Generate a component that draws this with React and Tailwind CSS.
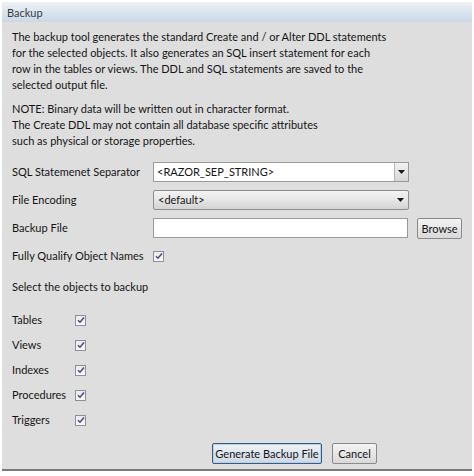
// <= BACKUP DIALOG =>
const objectTypes = ["Tables", "Views", "Indexes", "Procedures", "Triggers"];

// small checked checkbox like the Windows 7 look
const CheckBox = () => (
  <span className="flex items-center justify-center w-[11px] h-[11px] border border-[#8f8f9a] bg-gradient-to-b from-[#e9e9ef] to-[#fafafa]">
    <svg width="8" height="8" viewBox="0 0 8 8">
      <path d="M1 4.2 L3 6.2 L7 1.6" fill="none" stroke="#4a4f7a" strokeWidth="1.6" />
    </svg>
  </span>
);

const DropArrow = () => (
  <svg width="7" height="4" viewBox="0 0 7 4">
    <path d="M0 0 H7 L3.5 4 Z" fill="#1a1a1a" />
  </svg>
);

const App = () => {
  return (
    // PAGE
    <div
      className="w-[474px] h-[476px] bg-white pt-[2px] text-[11px] text-[#151515] whitespace-nowrap"
      style={{ fontFamily: 'Lato, "Noto Sans", sans-serif' }}
    >
      {/* DIALOG */}
      <div className="ml-[2px] w-[470px] h-[469px] flex flex-col bg-[#dedede] border-b-[2px] border-[#7a7a7a]">
        {/* TITLE BAR */}
        <div className="h-[20px] flex items-center pl-[5px] bg-gradient-to-b from-[#eef1f6] to-[#c9d8e8] text-[#3a3a3a] leading-none">
          Backup
        </div>

        {/* BODY */}
        <div className="flex flex-col px-[10px] pt-[7px] leading-[16px]">
          <p>
            The backup tool generates the standard Create and / or Alter DDL statements
            <br />
            for the selected objects. It also generates an SQL insert statement for each
            <br />
            row in the tables or views. The DDL and SQL statements are saved to the
            <br />
            selected output file.
          </p>
          <p className="mt-[8px]">
            NOTE: Binary data will be written out in character format.
            <br />
            The Create DDL may not contain all database specific attributes
            <br />
            such as physical or storage properties.
          </p>

          {/* SETTINGS */}
          <div className="mt-[13px] flex flex-col gap-[8px]">
            <div className="flex items-center h-[20px]">
              <span className="w-[141px]">SQL Statemenet Separator</span>
              <div className="w-[256px] h-[20px] flex border border-[#9a9a9a] bg-white">
                <span className="flex-1 pl-[3px] leading-[18px]">&lt;RAZOR_SEP_STRING&gt;</span>
                <span className="w-[14px] flex items-center justify-center border-l border-[#b5b5b5] bg-gradient-to-b from-[#f2f2f2] to-[#d6d6d6]">
                  <DropArrow />
                </span>
              </div>
            </div>
            <div className="flex items-center h-[20px]">
              <span className="w-[141px]">File Encoding</span>
              <div className="w-[256px] h-[20px] flex items-center justify-between px-[4px] border border-[#8e8e8e] rounded-[2px] bg-gradient-to-b from-[#f3f3f3] via-[#e6e6e6] to-[#d3d3d3]">
                <span>&lt;default&gt;</span>
                <DropArrow />
              </div>
            </div>
            <div className="flex items-center h-[20px]">
              <span className="w-[141px]">Backup File</span>
              <div className="w-[256px] h-[20px] border border-[#9a9a9a] bg-white" />
              <button className="ml-[9px] h-[21px] w-[45px] border border-[#8a8a8a] rounded-[2px] bg-gradient-to-b from-[#f4f4f4] to-[#d9d9d9] leading-none">
                Browse
              </button>
            </div>
            <div className="flex items-center h-[20px]">
              <span className="w-[141px]">Fully Qualify Object Names</span>
              <CheckBox />
            </div>
          </div>

          <div className="mt-[13px] h-[16px]">Select the objects to backup</div>

          {/* OBJECT TYPES */}
          <div className="mt-[17px] flex flex-col gap-[9px]">
            {objectTypes.map((obj) => (
              <div key={obj} className="flex items-center h-[16px]">
                <span className="w-[63px]">{obj}</span>
                <CheckBox />
              </div>
            ))}
          </div>

          {/* ACTIONS */}
          <div className="mt-[15px] flex justify-end gap-[10px] pr-[85px]">
            <button className="h-[21px] w-[110px] border border-[#3c5a82] rounded-[2px] bg-gradient-to-b from-[#eef3f8] to-[#cfd8e2] leading-none shadow-[inset_0_0_0_1px_#b6d0ea]">
              Generate Backup File
            </button>
            <button className="h-[21px] w-[45px] border border-[#8a8a8a] rounded-[2px] bg-gradient-to-b from-[#f4f4f4] to-[#d9d9d9] leading-none">
              Cancel
            </button>
          </div>
        </div>
      </div>
    </div>
  );
};

export default App;
